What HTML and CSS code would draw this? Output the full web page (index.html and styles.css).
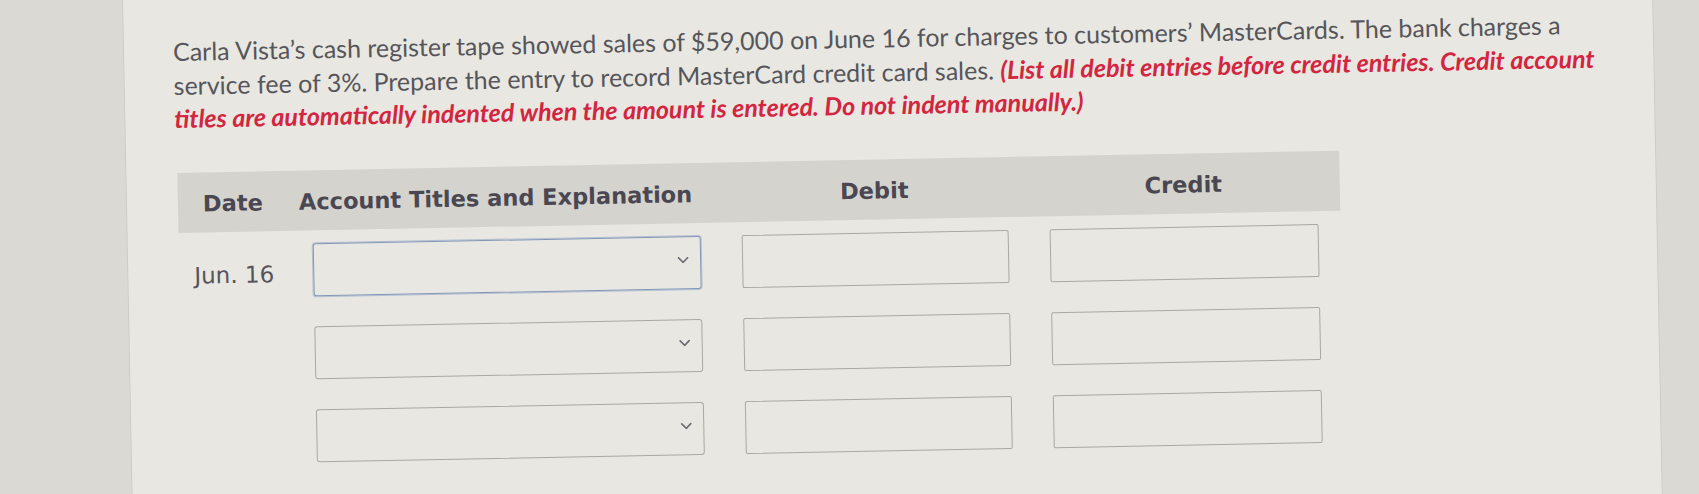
FILE: index.html
```html
<!DOCTYPE html>
<html lang="en">
<head>
<meta charset="utf-8">
<title>Journal entry</title>
<link rel="stylesheet" href="styles.css">
</head>
<body>
<div class="screen">
  <div class="panel">
    <p class="prompt">Carla Vista’s cash register tape showed sales of $59,000 on June 16 for charges to customers’ MasterCards. The bank charges a service fee of 3%. Prepare the entry to record MasterCard credit card sales. <span class="note">(List all debit entries before credit entries. Credit account titles are automatically indented when the amount is entered. Do not indent manually.)</span></p>

    <div class="entry">
      <div class="head">
        <div class="h-date">Date</div>
        <div class="h-acct">Account Titles and Explanation</div>
        <div class="h-amt">Debit</div>
        <div class="h-amt">Credit</div>
      </div>

      <div class="row">
        <div class="date">Jun. 16</div>
        <div class="select focus"><svg class="chev" viewBox="0 0 12 7"><polyline points="1,1 6,6 11,1"/></svg></div>
        <div class="field"></div>
        <div class="field"></div>
      </div>
      <div class="row">
        <div class="date"></div>
        <div class="select"><svg class="chev" viewBox="0 0 12 7"><polyline points="1,1 6,6 11,1"/></svg></div>
        <div class="field"></div>
        <div class="field"></div>
      </div>
      <div class="row">
        <div class="date"></div>
        <div class="select"><svg class="chev" viewBox="0 0 12 7"><polyline points="1,1 6,6 11,1"/></svg></div>
        <div class="field"></div>
        <div class="field"></div>
      </div>
    </div>
  </div>
</div>
</body>
</html>
```

FILE: styles.css
```css
html, body {
  margin: 0;
  padding: 0;
  background: #dad9d3;
}

.screen {
  width: 1699px;
  height: 494px;
  overflow: hidden;
  padding-left: 122px;
  box-sizing: border-box;
}

.panel {
  width: 1531px;
  height: 580px;
  box-sizing: border-box;
  background: #e8e7e1;
  border-left: 1px solid #cbcac4;
  border-right: 1px solid #cbcac4;
  padding: 36px 0 0 49px;
  transform: rotate(-1.1deg);
  transform-origin: 0 0;
}

.prompt {
  margin: 0;
  width: 1450px;
  font-family: Lato, "Liberation Sans", sans-serif;
  font-size: 25px;
  line-height: 33.5px;
  color: #56555a;
}

.note {
  color: #d3253f;
  font-weight: bold;
  font-style: italic;
}

.entry {
  margin: 37px 0 0 2px;
  width: 1162px;
  font-family: "DejaVu Sans", Verdana, sans-serif;
}

.head,
.row {
  display: grid;
  grid-template-columns: 93px 388px 267px 269px;
  column-gap: 41px;
  padding-right: 22px;
}

.head {
  height: 60px;
  background: #d4d3cd;
  align-items: center;
  font-size: 22.5px;
  font-weight: bold;
  color: #4a4752;
  padding-top: 2px;
  box-sizing: border-box;
}

.h-date {
  padding-left: 25px;
}

.h-acct {
  margin-left: -13px;
  white-space: nowrap;
}

.h-amt {
  text-align: center;
}

.row {
  height: 53px;
  margin-top: 30px;
}

.head + .row {
  margin-top: 13px;
}

.date {
  display: flex;
  align-items: center;
  padding: 7px 0 0 15px;
  font-size: 23px;
  color: #55545a;
  white-space: nowrap;
}

.select {
  display: flex;
  align-items: center;
  justify-content: flex-end;
  padding: 0 11px 6px 0;
  border: 1px solid #a9a8a4;
  border-radius: 3px;
}

.select.focus {
  border-color: #8397b8;
  box-shadow: 0 0 0 1px rgba(120, 145, 190, 0.45);
}

.chev {
  width: 12px;
  height: 7px;
  fill: none;
  stroke: #6c6b70;
  stroke-width: 1.6;
}

.field {
  border: 1px solid #a9a8a4;
  border-radius: 2px;
}
```
